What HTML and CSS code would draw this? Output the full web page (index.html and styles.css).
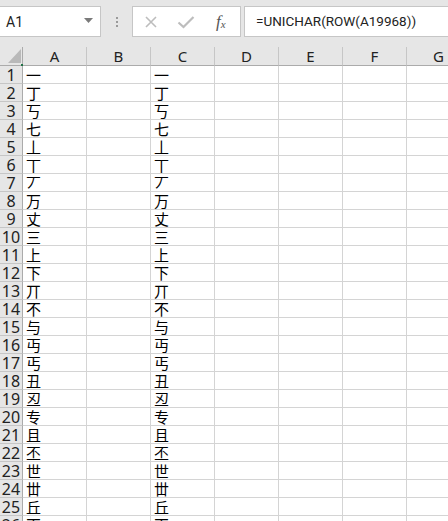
FILE: index.html
```html
<!DOCTYPE html>
<html>
<head>
<meta charset="utf-8">
<link rel="stylesheet" href="styles.css">
</head>
<body>
<div class="toolbar">
  <div class="namebox">
    <span class="nb-text">A1</span>
    <svg class="nb-arrow" width="9" height="5" viewBox="0 0 9 5"><path d="M0 0 H9 L4.5 5 Z" fill="#7a7a7a"/></svg>
  </div>
  <div class="grip"><i></i><i></i><i></i></div>
  <div class="fbtns">
    <svg class="btn" width="14" height="14" viewBox="0 0 14 14"><path d="M2 2 L12 12 M12 2 L2 12" stroke="#bdbdbd" stroke-width="1.6" fill="none"/></svg>
    <svg class="btn" width="18" height="14" viewBox="0 0 18 14"><path d="M1.5 7.5 L6.5 12 L16.5 2" stroke="#bdbdbd" stroke-width="2.2" fill="none"/></svg>
    <span class="fx">f<sub>x</sub></span>
  </div>
  <div class="formula">=UNICHAR(ROW(A19968))</div>
</div>
<div class="grid" id="grid">
  <div class="corner"><span class="tri"></span><span class="dot"></span></div>
  <div class="ch">A</div><div class="ch">B</div><div class="ch">C</div><div class="ch">D</div><div class="ch">E</div><div class="ch">F</div><div class="ch">G</div>
</div>
<script src="app.js"></script>
</body>
</html>
```
FILE: app.js
```js
(function () {
  var grid = document.getElementById('grid');
  var html = '';
  for (var r = 1; r <= 26; r++) {
    var ch = String.fromCharCode(0x4E00 + r - 1);
    html += '<div class="rh">' + r + '</div>';
    html += '<div class="c">' + ch + '</div>';
    html += '<div class="c"></div>';
    html += '<div class="c">' + ch + '</div>';
    html += '<div class="c"></div><div class="c"></div><div class="c"></div><div class="c"></div>';
  }
  grid.insertAdjacentHTML('beforeend', html);
})();
```
FILE: styles.css
```css
html, body {
  margin: 0;
  padding: 0;
  background: #e6e6e6;
  overflow: hidden;
  width: 448px;
  height: 521px;
}
body {
  font-family: "Noto Sans CJK SC", "Noto Sans", sans-serif;
}
.toolbar {
  height: 47px;
  box-sizing: border-box;
  padding-top: 6px;
  display: flex;
  align-items: flex-start;
  background: #e6e6e6;
}
.namebox {
  margin-left: -1px;
  width: 102px;
  height: 31px;
  box-sizing: border-box;
  background: #fff;
  border: 1px solid #c6c6c6;
  display: flex;
  align-items: center;
  justify-content: space-between;
  padding: 0 7px 0 6px;
}
.nb-text {
  font-family: Roboto, sans-serif;
  font-size: 14px;
  color: #222;
}
.nb-arrow { margin-top: -2px; }
.grip {
  width: 31px;
  height: 31px;
  display: flex;
  flex-direction: column;
  align-items: center;
  justify-content: center;
  gap: 2px;
}
.grip i {
  display: block;
  width: 2px;
  height: 2px;
  background: #9a9a9a;
}
.fbtns {
  width: 109px;
  height: 31px;
  box-sizing: border-box;
  background: #fff;
  border: 1px solid #c6c6c6;
  display: flex;
  align-items: center;
  padding-left: 11px;
  gap: 19px;
}
.fx {
  font-family: "Liberation Serif", serif;
  font-style: italic;
  font-size: 17px;
  color: #555;
  margin-left: 2px;
}
.fx sub { font-size: 11px; vertical-align: -1px; }
.formula {
  margin-left: 3px;
  flex: 1;
  height: 31px;
  box-sizing: border-box;
  background: #fff;
  border: 1px solid #c6c6c6;
  border-right: none;
  padding-left: 11px;
  font-family: Roboto, sans-serif;
  font-size: 13.5px;
  line-height: 29px;
  color: #222;
  white-space: nowrap;
}
.grid {
  display: grid;
  grid-template-columns: 23px repeat(7, 64px);
  grid-template-rows: 19px;
  grid-auto-rows: 18px;
  background: #fff;
}
.grid > div {
  box-sizing: border-box;
  border-right: 1px solid #d4d4d4;
  border-bottom: 1px solid #d4d4d4;
}
.grid > .corner {
  position: relative;
  background: #e6e6e6;
  border-right: 1px solid #ababab;
  border-bottom: 1px solid #ababab;
}
.tri {
  position: absolute;
  right: 1px;
  bottom: 2px;
  width: 0;
  height: 0;
  border-left: 13px solid transparent;
  border-bottom: 14px solid #b9b9b9;
}
.dot {
  position: absolute;
  right: -1px;
  bottom: -1px;
  width: 2px;
  height: 2px;
  background: #1e7145;
}
.grid > .ch {
  background: #e6e6e6;
  border-right: 1px solid #c6c6c6;
  border-bottom: 1px solid #ababab;
  text-align: center;
  font-family: "Noto Sans", sans-serif;
  font-size: 15px;
  line-height: 19px;
  color: #222;
}
.grid > .rh {
  background: #e6e6e6;
  border-right: 1px solid #ababab;
  border-bottom: 1px solid #c6c6c6;
  text-align: center;
  font-family: "Noto Sans", sans-serif;
  font-size: 16px;
  line-height: 18px;
  color: #222;
  white-space: nowrap;
}
.grid > .c {
  font-family: "Noto Sans CJK SC", sans-serif;
  font-size: 15px;
  line-height: 17px;
  padding-left: 3px;
  color: #000;
  white-space: nowrap;
}
```
